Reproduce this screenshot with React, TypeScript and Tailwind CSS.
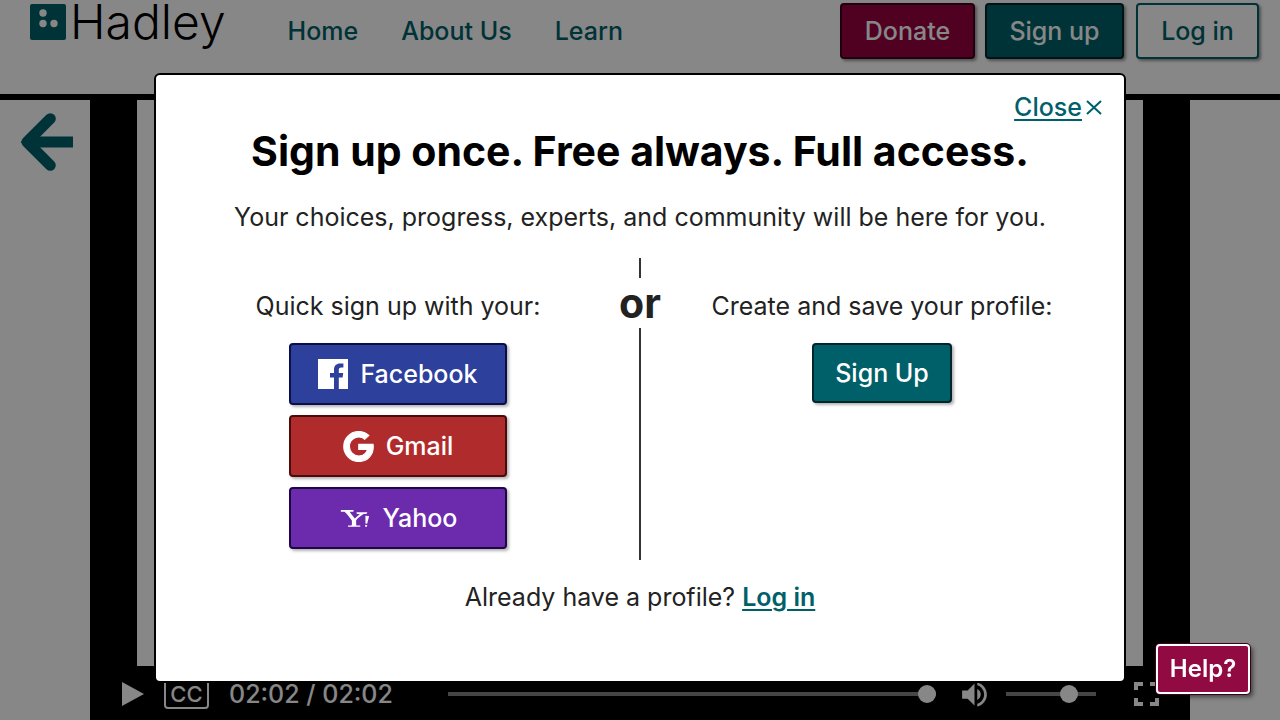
import React, { useState } from 'react';
import { FaGoogle } from 'react-icons/fa';
import { MdVolumeUp } from 'react-icons/md';
import { DiYahooSmall } from 'react-icons/di';

const FacebookIcon = () => (
  <svg width="30" height="30" viewBox="0 0 30 30" aria-hidden="true">
    <rect width="30" height="30" fill="#ffffff" />
    <path
      d="M16 30V18.5h-4v-4.6h4v-3.4C16 6.6 18.4 4.4 22 4.4h3.4v4.2h-2.2c-1.9 0-2.4.9-2.4 2.4v2.9h4.4l-.6 4.6h-3.8V30z"
      fill="#2c409c"
    />
  </svg>
);

const BackArrow = () => (
  <svg width="52" height="58" viewBox="0 0 52 58" fill="none" stroke="#006069" strokeWidth="11" aria-hidden="true">
    <path d="M6 29h46" />
    <path d="M29.3 5.7 6 29l23.3 23.3" strokeLinecap="round" strokeLinejoin="round" />
    <path d="M2 26.5-.2 29 2 31.5 8 37V21z" fill="#006069" stroke="none" />
  </svg>
);

const BrandMark = () => (
  <svg width="36" height="36" viewBox="0 0 36 36" aria-hidden="true">
    <rect width="36" height="36" rx="2" fill="#006069" />
    <circle cx="13" cy="9" r="3.7" fill="#ffffff" />
    <circle cx="13" cy="19.5" r="3.7" fill="#ffffff" />
    <circle cx="24" cy="19.5" r="3.7" fill="#ffffff" />
  </svg>
);

const navLinks = ['Home', 'About Us', 'Learn'];

const providers = [
  { name: 'Facebook', icon: <FacebookIcon />, color: 'bg-[#2c409c] border-[#0a0f4a]' },
  {
    name: 'Gmail',
    icon: <FaGoogle size={31} stroke="currentColor" strokeWidth={18} />,
    color: 'bg-[#b02c2c] border-[#4a0b0b]',
  },
  { name: 'Yahoo', icon: <DiYahooSmall size={40} className="-mx-1" />, color: 'bg-[#6c2bad] border-[#1e0648]' },
];

const slider =
  'appearance-none h-1 bg-[#848484] [&::-webkit-slider-thumb]:appearance-none [&::-webkit-slider-thumb]:size-[18px] [&::-webkit-slider-thumb]:rounded-full [&::-webkit-slider-thumb]:bg-white';

const Header = () => (
  <header className="flex h-[100px] items-start justify-between border-b-6 border-black bg-white pl-[30px] pr-[21px]">
    <div className="flex items-start">
      <a href="#home" className="flex items-start gap-1 pt-1 text-black">
        <BrandMark />
        <span className="text-5xl font-light leading-9">Hadley</span>
      </a>
      <nav className="ml-[62px] flex h-[62px] items-center gap-[43px]">
        {navLinks.map((label) => (
          <a key={label} href="#nav" className="text-[25px] font-medium leading-8 text-[#006069]">
            {label}
          </a>
        ))}
      </nav>
    </div>
    <div className="flex gap-[10px] pt-[3px] text-[25px] font-medium leading-8">
      <button className="h-14 w-[135px] rounded border-2 border-[#3d001c] bg-[#97003f] text-white shadow-[2px_2px_3px_rgba(0,0,0,0.4)]">
        Donate
      </button>
      <button className="h-14 w-[139px] rounded border-2 border-[#002226] bg-[#006069] text-white shadow-[2px_2px_3px_rgba(0,0,0,0.4)]">
        Sign up
      </button>
      <button className="ml-[2px] h-14 w-[123px] rounded border-2 border-[#006069] bg-white text-[#006069] shadow-[2px_2px_3px_rgba(0,0,0,0.4)]">
        Log in
      </button>
    </div>
  </header>
);

const VideoPlayer = () => (
  <section className="flex flex-1 flex-col bg-black">
    <div className="mx-[47px] flex-1 bg-white" />
    <div className="flex h-[54px] items-center pl-8 pr-[31px] pt-[2px] text-white">
      <button aria-label="Play">
        <svg width="22" height="24" viewBox="0 0 22 24" fill="currentColor" aria-hidden="true">
          <path d="M0 0 22 12 0 24z" />
        </svg>
      </button>
      <button className="ml-5 h-[30px] w-[45px] rounded-sm border-2 border-white text-[22px] font-medium leading-none">CC</button>
      <span className="ml-5 text-[25px] font-medium leading-8">02:02 / 02:02</span>
      <input type="range" aria-label="Seek" defaultValue={100} className={`ml-[55px] min-w-0 flex-1 ${slider}`} />
      <button aria-label="Mute" className="ml-[22px]">
        <MdVolumeUp size={33} />
      </button>
      <input type="range" aria-label="Volume" defaultValue={75} className={`ml-[15px] w-[90px] ${slider}`} />
      <button aria-label="Full screen" className="ml-[38px]">
        <svg width="25" height="24" viewBox="0 0 25 24" fill="none" stroke="currentColor" strokeWidth="4" aria-hidden="true">
          <path d="M2 8V2h7M16 2h7v6M23 16v6h-7M9 22H2v-6" />
        </svg>
      </button>
    </div>
  </section>
);

const SignUpDialog = ({ onClose }: { onClose: () => void }) => (
  <div
    role="dialog"
    aria-modal="true"
    aria-labelledby="signup-title"
    className="mx-4 w-full max-w-[972px] rounded-md border-2 border-black bg-white pb-[68px] pt-[14px] text-[25px] leading-8 text-[#222222]"
  >
    <div className="flex h-9 justify-end pr-[22px]">
      <button onClick={onClose} className="flex items-center gap-1 font-medium text-[#006069]">
        <span className="underline decoration-2 underline-offset-3">Close</span>
        <svg width="16" height="16" viewBox="0 0 16 16" stroke="currentColor" strokeWidth="2" aria-hidden="true">
          <path d="m1 2 14 13M15 2 1 15" />
        </svg>
      </button>
    </div>
    <h1 id="signup-title" className="text-center text-[41px] font-bold leading-[52px] text-black">
      Sign up once. Free always. Full access.
    </h1>
    <p className="mt-6 text-center">
      Your choices, progress, experts, and community will be here for you.
    </p>

    <div className="mt-[25px] grid grid-cols-[1fr_44px_1fr] px-[22px]">
      <div className="flex flex-col items-center gap-[10px] pb-[11px] pt-8">
        <p className="mb-[11px]">Quick sign up with your:</p>
        {providers.map(({ name, icon, color }) => (
          <button
            key={name}
            className={`flex h-[62px] w-[218px] items-center justify-center gap-3 rounded border-2 font-medium text-white shadow-[2px_2px_3px_rgba(0,0,0,0.3)] ${color}`}
          >
            {icon}
            {name}
          </button>
        ))}
      </div>
      <div className="flex flex-col items-center">
        <span className="h-5 w-[2px] bg-[#333333]" />
        <span className="py-[2px] text-[41px] font-bold leading-[46px]">or</span>
        <span className="w-[2px] flex-1 bg-[#333333]" />
      </div>
      <div className="flex flex-col items-center gap-[21px] pt-8">
        <p>Create and save your profile:</p>
        <button className="h-[60px] w-[140px] rounded border-2 border-[#00252a] bg-[#006069] font-medium text-white shadow-[2px_2px_3px_rgba(0,0,0,0.3)]">
          Sign Up
        </button>
      </div>
    </div>

    <p className="mt-[21px] text-center">
      Already have a profile?{' '}
      <a href="#login" className="font-semibold text-[#006069] underline decoration-2 underline-offset-3">
        Log in
      </a>
    </p>
  </div>
);

export default function App() {
  const [open, setOpen] = useState(true);

  return (
    <div className="flex min-h-screen flex-col bg-white font-['Inter',sans-serif]">
      <Header />
      <main className="flex flex-1">
        <aside className="w-[90px] pl-[21px] pt-[13px]">
          <a href="#back" aria-label="Back">
            <BackArrow />
          </a>
        </aside>
        <VideoPlayer />
        <aside className="w-[90px]" />
      </main>

      {open && (
        <div className="fixed inset-0 flex items-start justify-center overflow-auto bg-black/47 pt-[73px]">
          <SignUpDialog onClose={() => setOpen(false)} />
        </div>
      )}

      <button className="fixed bottom-[26px] right-[30px] h-[50px] w-[94px] rounded border-2 border-white bg-[#920a42] text-2xl font-semibold text-white shadow-[0_0_0_1px_#3d001c,3px_3px_4px_rgba(0,0,0,0.5)]">
        Help?
      </button>
    </div>
  );
}
